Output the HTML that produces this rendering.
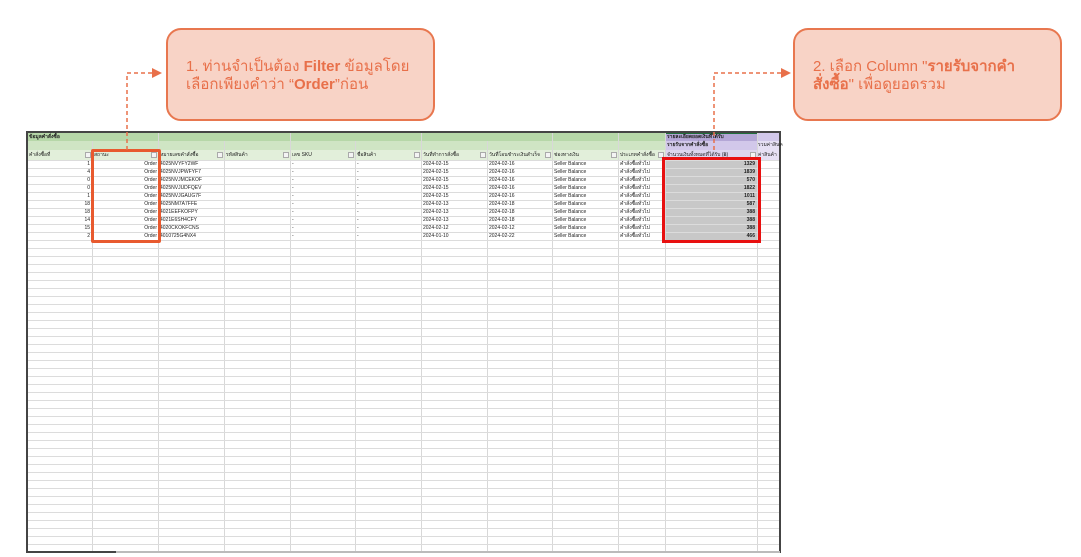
<!DOCTYPE html>
<html><head><meta charset="utf-8"><style>
body{margin:0;width:1081px;height:557px;background:#fff;position:relative;overflow:hidden;font-family:"Liberation Sans","Noto Sans CJK SC",sans-serif}
.a{position:absolute}
.t{position:absolute;font-size:5px;color:#222;white-space:nowrap;line-height:8px}
.co{position:absolute;background:#f8d3c6;border:2px solid #e8774f;border-radius:15px;color:#e8704a;font-size:15px;line-height:18px;box-sizing:border-box}
.fb{position:absolute;width:6px;height:6px;border:1px solid #aaa;background:#f4f4f4;box-sizing:border-box}
</style></head><body>
<div class="a" style="left:26px;top:131px;width:755px;height:422px;border:2px solid #444;box-sizing:border-box;background:#fff"></div>
<svg class="a" style="left:0;top:0" width="1081" height="557">
<g>
<rect x="28" y="133" width="637" height="8" fill="#b6d7a8"/>
<rect x="28" y="141" width="637" height="9" fill="#cfe5c4"/>
<rect x="28" y="150" width="637" height="10" fill="#e2efda"/>
<rect x="665" y="133" width="92" height="8" fill="#b4a7d6"/>
<rect x="665" y="141" width="92" height="9" fill="#d2c8ea"/>
<rect x="665" y="150" width="92" height="10" fill="#ddd6ee"/>
<rect x="757" y="133" width="22" height="8" fill="#d2c8ea"/>
<rect x="757" y="141" width="22" height="19" fill="#e6e0f4"/>
<line x1="665" y1="133.5" x2="757" y2="133.5" stroke="#1f6e3a" stroke-width="1"/>
<rect x="665" y="160" width="92" height="80" fill="#c8c8c8"/>
</g>
<g stroke="#d8d8d8" stroke-width="1">
<line x1="92.5" y1="141" x2="92.5" y2="551"/><line x1="158.5" y1="133" x2="158.5" y2="551"/>
<line x1="224.5" y1="141" x2="224.5" y2="551"/><line x1="290.5" y1="133" x2="290.5" y2="551"/>
<line x1="355.5" y1="141" x2="355.5" y2="551"/><line x1="421.5" y1="133" x2="421.5" y2="551"/>
<line x1="487.5" y1="141" x2="487.5" y2="551"/><line x1="552.5" y1="133" x2="552.5" y2="551"/>
<line x1="618.5" y1="133" x2="618.5" y2="551"/><line x1="665.5" y1="133" x2="665.5" y2="551"/>
<line x1="757.5" y1="133" x2="757.5" y2="551"/>
</g>
<g stroke="#dcdcdc" stroke-width="1" id="rows"></g>
</svg>
<div id="cells"></div>
<div class="a" style="left:91px;top:149px;width:70px;height:94px;border:3px solid #e85a2f;border-radius:2px;box-sizing:border-box"></div>
<div class="a" style="left:662px;top:157px;width:99px;height:86px;border:3px solid #e81010;box-sizing:border-box"></div>
<div class="a" style="left:116px;top:551px;width:664px;height:2px;background:#bbb"></div>
<svg class="a" style="left:0;top:0" width="1081" height="557">
<path d="M127 150 V73 H152" fill="none" stroke="#e8704a" stroke-width="1.5" stroke-dasharray="4,3"/>
<polygon points="152,68 162,73 152,78" fill="#e8704a"/>
<path d="M714 150 V73 H781" fill="none" stroke="#e8704a" stroke-width="1.5" stroke-dasharray="4,3"/>
<polygon points="781,68 791,73 781,78" fill="#e8704a"/>
</svg>
<div class="co" style="left:166px;top:28px;width:269px;height:93px;padding:28px 0 0 18px">1. ท่านจำเป็นต้อง <b>Filter</b> ข้อมูลโดย<br>เลือกเพียงคำว่า “<b>Order</b>”ก่อน</div>
<div class="co" style="left:793px;top:28px;width:269px;height:93px;padding:28px 0 0 18px">2. เลือก Column "<b>รายรับจากคำ<br>สั่งซื้อ</b>" เพื่อดูยอดรวม</div>
<script>
var r=document.getElementById('rows'),h='';
for(var y=160;y<552;y+=8){h+='<line x1="28" y1="'+(y+.5)+'" x2="779" y2="'+(y+.5)+'"/>';}
r.innerHTML=h;
var c='';
function t(x,y,s,ex){c+='<div class="t" style="left:'+x+'px;top:'+y+'px;'+(ex||'')+'">'+s+'</div>';}
t(29,133,'ข้อมูลคำสั่งซื้อ','font-weight:bold');
t(667,133,'รายละเอียดยอดเงินที่ได้รับ','font-weight:bold');
t(667,141,'รายรับจากคำสั่งซื้อ','font-weight:bold');
t(758,141,'รวมค่าสินค');
var hd=[[29,'คำสั่งซื้อที่'],[94,'สถานะ'],[160,'หมายเลขคำสั่งซื้อ'],[226,'รหัสสินค้า'],[292,'เลข SKU'],[357,'ชื่อสินค้า'],[423,'วันที่ทำการสั่งซื้อ'],[489,'วันที่โอนชำระเงินสำเร็จ'],[554,'ช่องทางเงิน'],[620,'ประเภทคำสั่งซื้อ'],[667,'จำนวนเงินทั้งหมดที่ได้รับ (฿)'],[758,'ค่าสินค้า']];
hd.forEach(function(a){t(a[0],151,a[1]);});
[85,151,217,283,348,414,480,545,611,658,750].forEach(function(x){c+='<div class="fb" style="left:'+x+'px;top:152px"></div>';});
var ids=['1','4','0','0','1','18','18','14','15','2'],
on=['4025NVYFY2WF','4025NVJPWFYF7','4025NVJMCEKOF','4025NVJUDFQEV','4025NVJGAUG7F','4025NM7A7FFE','4021EEFKOFPY','4021E6SH4CFY','4020CKOKFCNS','4010725G4NX4'],
d1=['2024-02-15','2024-02-15','2024-02-15','2024-02-15','2024-02-15','2024-02-13','2024-02-13','2024-02-13','2024-02-12','2024-01-10'],
d2=['2024-02-16','2024-02-16','2024-02-16','2024-02-16','2024-02-16','2024-02-18','2024-02-18','2024-02-18','2024-02-12','2024-02-22'],
v=['1329','1839','570','1822','1011','587','388','388','388','466'];
for(var i=0;i<10;i++){var y=160+i*8;
t(60,y,ids[i],'width:30px;text-align:right');
t(110,y,'Order','width:47px;text-align:right');
t(160,y,on[i]);t(292,y,'-');t(357,y,'-');t(423,y,d1[i]);t(489,y,d2[i]);t(554,y,'Seller Balance');t(620,y,'คำสั่งซื้อทั่วไป');
t(667,y,v[i],'width:88px;text-align:right;font-weight:bold');}
document.getElementById('cells').innerHTML=c;
</script>
</body></html>
